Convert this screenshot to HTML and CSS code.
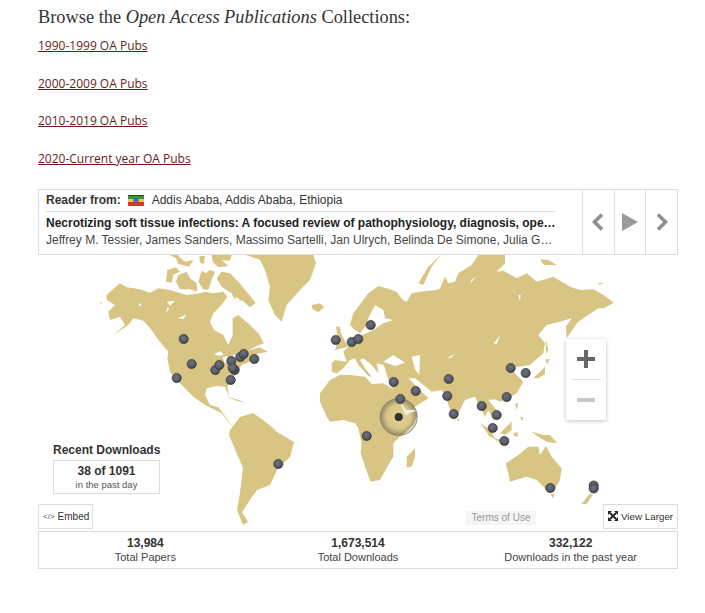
FILE: index.html
```html
<!doctype html>
<html lang="en">
  <head>
    <meta charset="utf-8" />
    <meta name="viewport" content="width=device-width, initial-scale=1" />
    <title>Open Access Publications</title>
    <link rel="stylesheet" href="styles.css">
  </head>
  <body>
    <div class="wrap">
      <h2 class="browse">Browse the <em>Open Access Publications</em> Collections:</h2>
      <p class="coll"><a href="#">1990-1999 OA Pubs</a></p>
      <p class="coll"><a href="#">2000-2009 OA Pubs</a></p>
      <p class="coll"><a href="#">2010-2019 OA Pubs</a></p>
      <p class="coll"><a href="#">2020-Current year OA Pubs</a></p>

      <div class="reader">
        <div class="reader-text">
          <div class="from">
            <b>Reader from:</b>
            <svg class="flag" viewBox="0 0 16 11">
              <rect width="16" height="11" fill="#e3c93c" />
              <rect width="16" height="4" fill="#2f9a3c" />
              <rect y="7" width="16" height="4" fill="#d8362c" />
              <rect width="16" height="1" fill="#33403a" />
              <circle cx="8" cy="5.5" r="2.6" fill="#3f6fb0" />
            </svg>
            <span>Addis Ababa, Addis Ababa, Ethiopia</span>
          </div>
          <div class="title">Necrotizing soft tissue infections: A focused review of pathophysiology, diagnosis, ope…</div>
          <div class="authors">Jeffrey M. Tessier, James Sanders, Massimo Sartelli, Jan Ulrych, Belinda De Simone, Julia G…</div>
        </div>
        <div class="nav">
          <svg viewBox="0 0 14 18"><path d="M11 1.5 3.5 9l7.5 7.5" fill="none" stroke="#8f8f8f" stroke-width="3.6" /></svg>
        </div>
        <div class="nav nav-play">
          <svg viewBox="0 0 16 18"><path d="M0 0 16 9 0 18z" fill="#9a9a9a" /></svg>
        </div>
        <div class="nav">
          <svg viewBox="0 0 14 18"><path d="M3 1.5 10.500 9 3 16.500" fill="none" stroke="#8f8f8f" stroke-width="3.600" /></svg>
        </div>
      </div>

      <div class="map">
        <svg class="world" viewBox="38 255 640 276">
          <defs>
            <radialGradient id="pin" cx="45%" cy="40%" r="60%">
              <stop offset="0" stop-color="#6c7480" />
              <stop offset=".7" stop-color="#555962" />
              <stop offset="1" stop-color="#33343a" />
            </radialGradient>
            <radialGradient id="lens" cx="50%" cy="50%" r="50%">
              <stop offset="0" stop-color="#e3d296" />
              <stop offset=".65" stop-color="#d8c688" />
              <stop offset="1" stop-color="#978a64" />
            </radialGradient>
            <clipPath id="lens-clip"><circle cx="398.700" cy="417" r="18" /></clipPath>
            <symbol id="dot" overflow="visible">
              <circle r="4.600" fill="url(#pin)" stroke="#3a3b40" stroke-width=".7" />
            </symbol>
          </defs>

          <!-- americas -->
          <g class="land" transform="translate(90 250) scale(.3333)">
            <path d="M50 135 72 115 90 100 110 112 150 118 180 128 205 115 240 120 290 135 330 130 345 125 370 130 400 125 412 140 395 165 370 190 360 215 372 240 400 255 415 285 428 255 428 205 445 195 480 225 505 250 522 280 495 290 472 302 510 292 533 305 500 312 490 320 480 335 455 345 440 370 420 395 412 410 418 440 405 410 380 408 350 415 345 435 360 465 385 472 410 505 430 535 395 490 345 465 310 440 280 410 262 392 240 365 232 325 235 305 205 270 185 240 160 212 130 205 115 225 70 255 105 225 90 200 60 210 55 185 75 165 50 150z" />
            <path d="M228 95 232 60 258 52 270 65 250 75 245 98z" />
            <path d="M258 95 265 75 290 65 300 85 320 100 322 125 300 118 270 118z" />
            <path d="M325 95 335 62 348 70 358 60 375 65 365 90 355 120 340 118z" />
            <path d="M380 85 395 65 420 70 445 95 470 125 497 158 480 172 455 150 440 160 425 130 395 110z" />
            <path d="M365 15H425L420 32 395 30 415 48 385 52 368 35z" />
            <path d="M240 15H262L285 35 310 30 298 50 265 42 258 25z" />
            <path d="M328 18H345L342 42 330 38z" />
            <path d="M468 15H670L678 40 660 90 630 120 590 165 575 215 555 195 535 150 540 110 525 60 510 30z" />
            <path d="M665 165 690 160 702 172 685 187 668 178z" />
            <path d="M30 155 37 158 33 163z" />
            <path d="M410 440 440 448 468 460 440 452z" />
          </g>
          <g class="water" transform="translate(90 250) scale(.3333)">
            <path d="M372 312 392 303 400 315 385 317z" />
            <path d="M398 322 412 318 414 338 405 340z" />
            <path d="M415 322 445 310 440 322 420 332z" />
            <path d="M265 205 290 193 280 208z" />
            <path d="M230 155 255 152 240 168z" />
            <path d="M395 170 412 183 395 186z" />
            <path d="M145 158 155 165 150 170z" />
            <path d="M232 172 228 190 238 175z" />
            <path d="M430 168 438 140 450 150 445 165z" />
          </g>

          <path class="land" d="M229 435 234 447 243 468 240 493 237 510 243 525 248 522 242 512 252 497 257 490 270 485 278 468 290 457 294 442 277 432 273 428 263 420 253 413 240 417 230 430z" />

          <!-- eurasia -->
          <g class="land" transform="translate(340 250) scale(.3333)">
            <path d="M-25 340-15 330 20 335 10 305 30 285 60 258 100 240 130 220 160 210 135 205 130 180 105 165 85 205 80 225 60 250 45 240 30 225 40 190 85 130 115 108 140 115 170 125 188 150 200 155 215 130 240 125 290 120 300 115 315 80 325 100 345 95 355 70 395 45 415 15H495L495 40 470 65 490 62 530 85 560 70 590 95 640 80 690 110 720 120 760 118 790 135 822 158 790 175 775 175 745 195 715 215 690 250 680 265 678 230 695 205 660 215 620 225 595 255 615 280 610 310 570 345 530 352 510 340 525 370 550 395 530 430 505 445 480 455 465 448 445 450 465 475 478 490 460 510 445 480 435 500 420 470 405 440 375 450 345 510 335 490 320 450 305 420 275 425 250 405 225 385 205 385 240 420 265 445 225 470 195 480 175 450 155 410 140 375 135 355 130 345 110 340 115 370 95 345 70 325 60 330 75 355 95 380 85 378 55 345 45 325 30 330 10 355-10 370-25 365z" />
            <path d="M235 100 265 50 303 15 275 50 250 105z" />
            <path d="M600 28 625 30 652 46 612 45z" />
            <path d="M-12 232-2 228 5 255 25 290-15 300-5 270z" />
            <path d="M617 265 625 300 618 312z" />
            <path d="M580 385 615 350 615 372 595 385z" />
            <path d="M615 328 630 328 622 342z" />
            <path d="M772 100 790 98 780 104z" />
            <path d="M350 505 358 507 354 515z" />
          </g>
          <g class="water" transform="translate(340 250) scale(.3333)">
            <path d="M130 335 160 315 195 338 165 348z" />
            <path d="M215 320 240 315 238 375 225 358z" />
            <path d="M325 322 345 312 330 325z" />
            <path d="M460 280 480 258 470 282z" />
            <path d="M392 92 405 80 395 98z" />
            <path d="M535 135 542 135 540 155z" />
          </g>

          <!-- africa -->
          <path class="land" transform="translate(330 360) scale(.3333)" d="M-30 100-30 125-10 170 0 185 40 180 75 190 85 205 95 250 92 280 105 320 122 365 150 360 172 320 190 290 190 250 215 225 250 195 262 160 240 165 225 150 205 110 185 85 160 70 125 72 105 50 60 45 30 45 0 60z" />
          <path class="land" transform="translate(330 360) scale(.3333)" d="M230 290 255 265 255 290 245 320 230 322z" />

          <!-- asia pacific -->
          <g class="land" transform="translate(440 380) scale(.3333)">
            <path d="M197 250 235 225 265 200 295 200 300 225 318 198 335 230 365 265 360 300 340 335 320 330 290 300 260 290 210 305 205 280z" />
            <path d="M332 342 345 342 338 355z" />
            <path d="M275 155 310 165 330 165 352 190 320 185 295 170z" />
            <path d="M425 372 450 340 458 345 440 372z" />
            <path d="M180 160 215 125 215 150 195 165z" />
            <path d="M120 128 150 150 165 175 150 170z" />
            <path d="M155 170 205 190 170 182z" />
            <path d="M225 70 235 70 230 90z" />
            <path d="M240 110 250 112 247 124z" />
            <path d="M220 160 232 155 235 170 222 168z" />
            <path d="M52 115 58 118 56 124z" />
          </g>

          <!-- active reader -->
          <circle cx="398.700" cy="417" r="18.500" fill="url(#lens)" stroke="#7f7b68" stroke-width=".8" />
          <g clip-path="url(#lens-clip)">
            <g transform="translate(330 360) scale(.3333)">
              <path d="M205 115 228 150 262 150 226 166z" fill="#f1ede0" />
              <path d="M264 160 250 195 215 228 258 228 272 170z" fill="#d9d8d0" />
              <path d="M160 205 168 212 164 216z" fill="#f1ede0" />
            </g>
          </g>

          <g class="pins">
            <use href="#dot" x="183.700" y="339" />
            <use href="#dot" x="191.700" y="364" />
            <use href="#dot" x="176.700" y="378" />
            <use href="#dot" x="215.300" y="370" />
            <use href="#dot" x="219.300" y="365" />
            <use href="#dot" x="231.300" y="361" />
            <use href="#dot" x="234.700" y="370" />
            <use href="#dot" x="232.700" y="368" />
            <use href="#dot" x="230.700" y="380" />
            <use href="#dot" x="240.300" y="357" />
            <use href="#dot" x="243.700" y="354" />
            <use href="#dot" x="254.300" y="359" />
            <use href="#dot" x="335.700" y="340" />
            <use href="#dot" x="351.700" y="342" />
            <use href="#dot" x="358.300" y="339" />
            <use href="#dot" x="370.700" y="325" />
            <use href="#dot" x="393.700" y="382" />
            <use href="#dot" x="400.300" y="399" />
            <use href="#dot" x="415.700" y="391" />
            <use href="#dot" x="448.700" y="379" />
            <use href="#dot" x="447.300" y="396" />
            <use href="#dot" x="453.700" y="414" />
            <use href="#dot" x="481.700" y="406" />
            <use href="#dot" x="496.700" y="415" />
            <use href="#dot" x="492.700" y="428" />
            <use href="#dot" x="504.300" y="441" />
            <use href="#dot" x="506.700" y="397" />
            <use href="#dot" x="510.700" y="368" />
            <use href="#dot" x="525.700" y="373" />
            <use href="#dot" x="366.700" y="436" />
            <use href="#dot" x="278.300" y="464" />
            <use href="#dot" x="550.300" y="488" />
            <use href="#dot" x="593.700" y="485.500" />
            <use href="#dot" x="593.700" y="488.500" />
          </g>
          <circle cx="398.700" cy="417" r="3.800" fill="#333" stroke="#222" stroke-width=".6" />
        </svg>

        <div class="zoom">
          <button class="zoom-btn">
            <svg viewBox="0 0 18 18"><path d="M7 0h4v7h7v4h-7v7H7v-7H0V7h7z" fill="#666" /></svg>
          </button>
          <button class="zoom-btn zoom-out">
            <svg viewBox="0 0 18 4"><path d="M0 0h18v4H0z" fill="#c8c8c8" /></svg>
          </button>
        </div>

        <div class="recent">
          <div class="recent-head">Recent Downloads</div>
          <div class="recent-box">
            <b>38 of 1091</b>
            <span>in the past day</span>
          </div>
        </div>

        <a class="map-btn embed" href="#"><i>&lt;/&gt;</i> Embed</a>
        <span class="terms">Terms of Use</span>
        <a class="map-btn larger" href="#">
          <svg viewBox="0 0 10 10">
            <path d="M2 2 8 8M8 2 2 8" stroke="#222" stroke-width="1.800" fill="none" />
            <path d="M0 0h4L0 4zM10 0v4L6 0zM0 10V6l4 4zM10 10H6l4-4z" fill="#222" />
          </svg>
          View Larger
        </a>
      </div>

      <div class="stats">
        <div class="stat"><b>13,984</b><span>Total Papers</span></div>
        <div class="stat"><b>1,673,514</b><span>Total Downloads</span></div>
        <div class="stat"><b>332,122</b><span>Downloads in the past year</span></div>
      </div>
    </div>
  </body>
</html>
```

FILE: styles.css
```css
:root { --line:#ddd; --land:#d8c583; --fg:#333; --red:#6f1a1a; }
*{ box-sizing:border-box; }
body{ margin:0; background:#fff; color:var(--fg); font-family:"Liberation Sans", Arial, sans-serif; }
.wrap{ width:640px; margin-left:38px; padding-top:7px; }

.browse{ margin:0 0 10px; font-family:"Liberation Serif", Georgia, serif; font-weight:400; font-size:18.350px; line-height:20px; color:#333; }
.coll{ margin:0 0 19.600px; font-family:"Open Sans", sans-serif; font-size:12px; line-height:18px; }
.coll a{ color:var(--red); }

.reader{ display:flex; height:66px; margin-top:21px; border:1px solid var(--line); }
.reader-text{ width:543px; flex:none; padding:0 0 0 7px; font-size:12px; line-height:15px; }
.from{ display:flex; align-items:center; height:22px; border-bottom:1px solid var(--line); width:509px; }
.from b{ font-weight:700; }
.flag{ width:16px; height:11px; margin:0 8px 0 7px; }
.title{ margin-top:3px; font-weight:700; white-space:nowrap; line-height:17px; color:#222; }
.authors{ white-space:nowrap; line-height:17px; color:#444; }
.nav{ flex:1; display:flex; align-items:center; justify-content:center; border-left:1px solid var(--line); }
.nav svg{ width:14px; height:18px; }
.nav-play svg{ width:16px; }

.map{ position:relative; height:276px; }
.world{ display:block; width:640px; height:276px; }
.land{ fill:var(--land); }
.water{ fill:#fff; }

.zoom{ position:absolute; left:528px; top:84px; width:40px; height:81px; background:#fff; border-radius:2px; box-shadow:0 1px 4px rgba(0,0,0,.25); display:flex; flex-direction:column; }
.zoom-btn{ flex:1; display:flex; align-items:center; justify-content:center; border:0; padding:0; background:none; }
.zoom-btn svg{ width:18px; height:18px; }
.zoom-out{ position:relative; }
.zoom-out:before{ content:""; position:absolute; left:5px; right:5px; top:0; border-top:1px solid #e4e4e4; }
.zoom-out svg{ height:4px; }

.recent{ position:absolute; left:15px; top:188px; width:107px; text-align:center; }
.recent-head{ font-size:12px; font-weight:700; line-height:15px; color:#333; margin-bottom:2px; white-space:nowrap; }
.recent-box{ display:flex; flex-direction:column; height:34px; padding-top:2px; background:#fff; border:1px solid var(--line); }
.recent-box b{ font-size:12px; line-height:16px; }
.recent-box span{ font-size:9.500px; line-height:12px; color:#555; }

.map-btn{ position:absolute; top:249px; height:25px; display:flex; align-items:center; gap:3px; background:#fff; border:1px solid var(--line); color:#333; font-size:10px; text-decoration:none; }
.embed{ left:0; width:55px; padding-left:4px; }
.embed i{ font-style:normal; font-size:8px; color:#555; }
.larger{ right:0; width:75px; padding-left:4px; font-size:9.800px; }
.larger svg{ width:10px; height:10px; flex:none; }
.terms{ position:absolute; left:428px; top:256px; width:70px; height:14px; background:#f5f5f5; color:#999; font-size:10px; line-height:14px; text-align:center; }

.stats{ display:grid; grid-template-columns:repeat(3, 1fr); height:38px; border:1px solid var(--line); text-align:center; }
.stat{ display:flex; flex-direction:column; padding-top:4px; font-size:11px; color:#444; }
.stat b{ font-size:12px; line-height:14px; color:#333; }
.stat span{ line-height:14px; }
```
